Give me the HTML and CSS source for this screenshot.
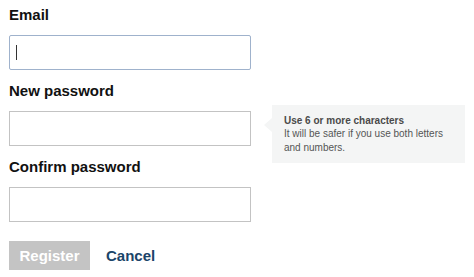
FILE: index.html
```html
<!DOCTYPE html>
<html>
<head>
<meta charset="utf-8">
<link rel="stylesheet" href="styles.css">
</head>
<body>
<form class="form">
  <div class="group">
    <label class="label">Email</label>
    <div class="field-wrap">
      <input class="field field-focus" type="text">
      <span class="caret"></span>
    </div>
  </div>
  <div class="group">
    <label class="label">New password</label>
    <div class="field-wrap">
      <input class="field" type="password">
      <div class="tip">
        <div class="tip-title">Use 6 or more characters</div>
        <div class="tip-text">It will be safer if you use both letters and numbers.</div>
      </div>
    </div>
  </div>
  <div class="group">
    <label class="label">Confirm password</label>
    <div class="field-wrap">
      <input class="field" type="password">
    </div>
  </div>
  <div class="actions">
    <button type="button" class="btn-register">Register</button>
    <a class="cancel" href="#">Cancel</a>
  </div>
</form>
</body>
</html>
```
FILE: styles.css
```css
html, body {
  margin: 0;
  padding: 0;
  background: #ffffff;
}
body {
  font-family: "Liberation Sans", Arial, sans-serif;
  padding: 6px 9px;
}
.form {
  display: flex;
  flex-direction: column;
}
.group {
  display: flex;
  flex-direction: column;
  margin-bottom: 12px;
}
.label {
  display: block;
  font-size: 15px;
  font-weight: bold;
  line-height: 17px;
  color: #111;
  margin-bottom: 12px;
}
.field-wrap {
  position: relative;
}
.field {
  display: block;
  box-sizing: border-box;
  width: 242px;
  height: 35px;
  margin: 0;
  padding: 0 8px;
  border: 1px solid #c3c3c3;
  border-radius: 0;
  background: #fff;
  outline: none;
  font-size: 14px;
}
.field-focus {
  border-color: #9fb2cc;
  border-radius: 2px;
}
.caret {
  position: absolute;
  left: 7px;
  top: 10px;
  width: 1px;
  height: 15px;
  background: #333;
}
.tip {
  position: absolute;
  left: 263px;
  top: -6px;
  width: 193px;
  height: 58px;
  box-sizing: border-box;
  padding: 9px 10px 0 12px;
  background: #f4f5f5;
  font-size: 10px;
  line-height: 14px;
  color: #555;
}
.tip::before {
  content: "";
  position: absolute;
  left: -8px;
  top: 13px;
  border-top: 7px solid transparent;
  border-bottom: 7px solid transparent;
  border-right: 8px solid #f4f5f5;
}
.tip-title {
  font-weight: bold;
  color: #4a4a4a;
  line-height: 13px;
}
.actions {
  display: flex;
  align-items: center;
  gap: 16px;
  margin-top: 7px;
}
.btn-register {
  height: 29px;
  width: 81px;
  padding: 0;
  margin: 0;
  border: none;
  background: #c4c4c4;
  color: #fff;
  font-family: "Liberation Sans", Arial, sans-serif;
  font-size: 15px;
  font-weight: bold;
}
.cancel {
  font-size: 15px;
  font-weight: bold;
  color: #1b4569;
  text-decoration: none;
}
```
